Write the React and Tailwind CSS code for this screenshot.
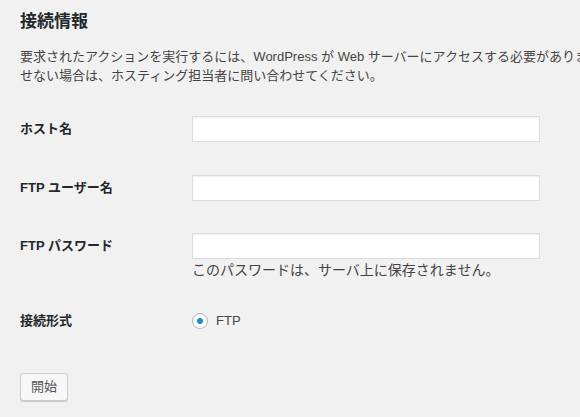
import React from 'react';

const FONT = { fontFamily: '"Liberation Sans", "Noto Sans CJK JP", sans-serif' };

function Field({ label, className = '', children }) {
  return (
    <div className={`flex items-start ${className}`}>
      <div className="w-[172px] shrink-0 text-[13px] leading-[26px] font-bold text-[#23282d]">{label}</div>
      <div className="flex flex-col">{children}</div>
    </div>
  );
}

function TextInput({ type = 'text' }) {
  return (
    <input
      type={type}
      className="w-[348px] h-[26px] bg-white border border-[#dddddd] shadow-[inset_0_1px_2px_rgba(0,0,0,0.07)] outline-none px-2 text-[13px]"
    />
  );
}

export default function App() {
  return (
    <div className="w-full min-h-[417px] bg-[#f1f1f1] overflow-hidden px-5 pt-[11px] text-[#444444]" style={FONT}>
      <h2 className="text-[17px] leading-[22px] font-bold text-[#23282d]">接続情報</h2>
      <div className="mt-[14px] text-[13px] leading-[19px] whitespace-nowrap">
        <p>要求されたアクションを実行するには、WordPress が Web サーバーにアクセスする必要があります。続行するには FTP の認証情報を入力してください。認証情報を思い出</p>
        <p>せない場合は、ホスティング担当者に問い合わせてください。</p>
      </div>

      <Field label="ホスト名" className="mt-[31px]">
        <TextInput />
      </Field>
      <Field label="FTP ユーザー名" className="mt-[33px]">
        <TextInput />
      </Field>
      <Field label="FTP パスワード" className="mt-[32px]">
        <TextInput type="password" />
        <p className="mt-[2px] text-[14px] leading-[19px]">このパスワードは、サーバ上に保存されません。</p>
      </Field>

      <div className="mt-[28px] flex items-center h-[26px]">
        <div className="w-[172px] shrink-0 text-[13px] font-bold text-[#23282d]">接続形式</div>
        <label className="flex items-center gap-[8px] text-[13px]">
          <span className="w-4 h-4 rounded-full bg-white border border-[#b4b9be] shadow-[inset_0_1px_2px_rgba(0,0,0,0.1)] flex items-center justify-center">
            <span className="w-[6px] h-[6px] rounded-full bg-[#1e8cbe]" />
          </span>
          FTP
        </label>
      </div>

      <button
        type="button"
        className="mt-[39px] w-[48px] h-[28px] rounded-[3px] bg-[#f7f7f7] border border-[#cccccc] shadow-[0_1px_0_#cccccc] text-[13px] text-[#555555]"
      >
        開始
      </button>
    </div>
  );
}
